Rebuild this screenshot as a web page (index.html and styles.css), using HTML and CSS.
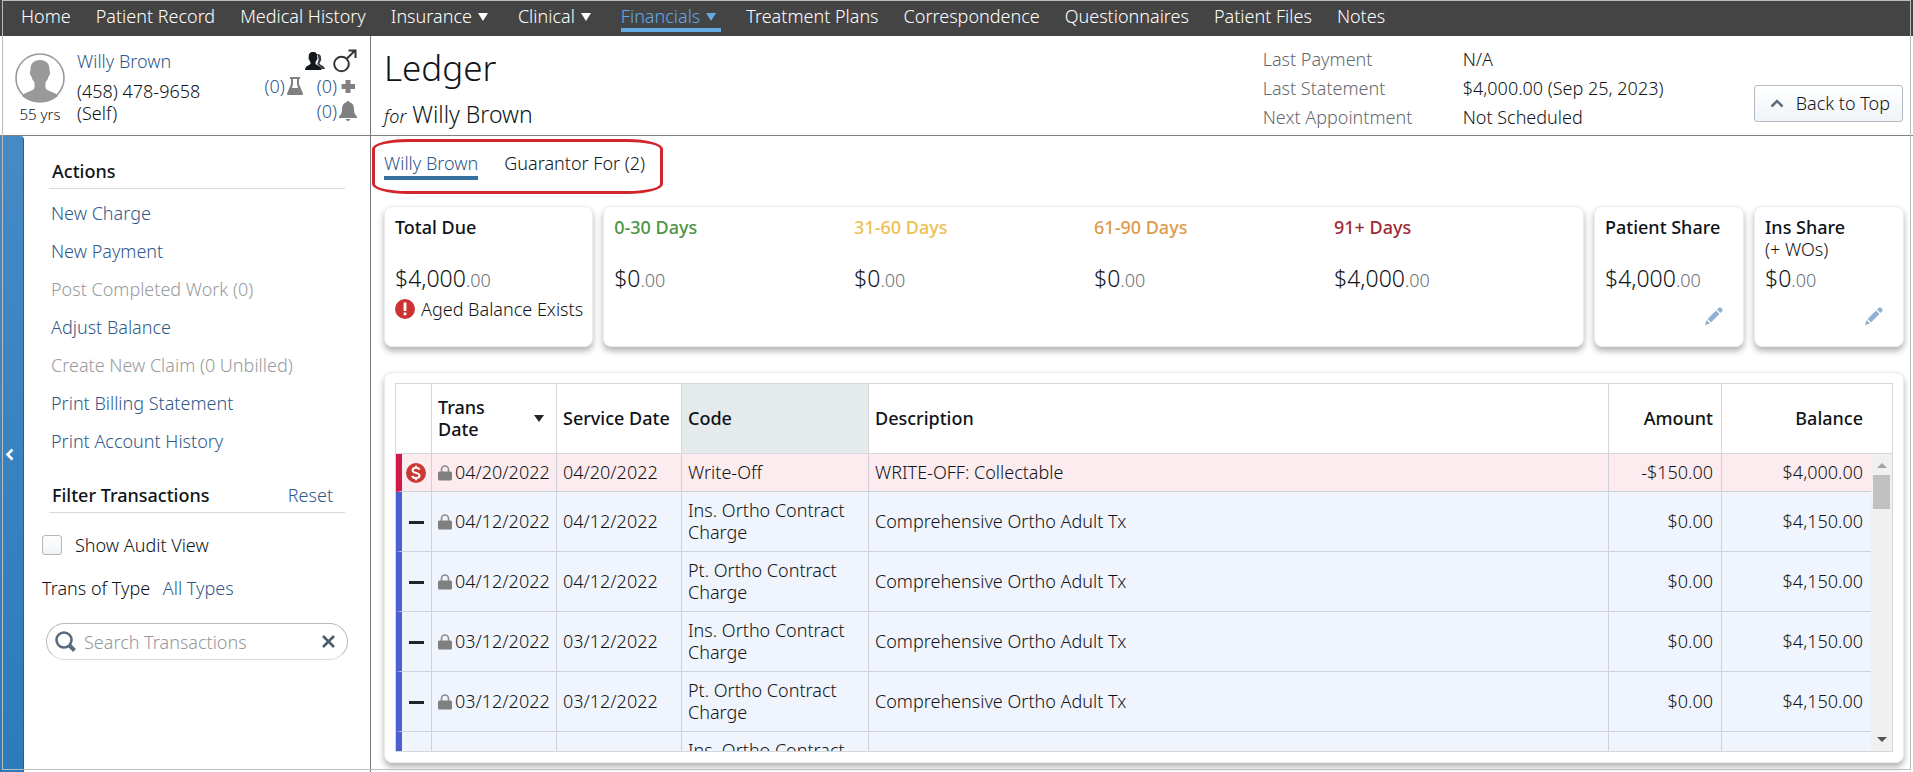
FILE: index.html
```html
<!DOCTYPE html>
<html lang="en">
<head>
    <meta charset="UTF-8">
    <meta name="viewport" content="width=device-width, initial-scale=1.0">
    <title>Ledger - Willy Brown</title>
    <link rel="stylesheet" href="styles.css">
</head>
<body>
    <!-- shared icons -->
    <svg class="sprite" aria-hidden="true">
        <symbol id="lock" viewBox="0 0 14 16">
            <path d="M3.5 7V4.5a3.5 3.5 0 0 1 7 0V7" fill="none" stroke="#8a8a8a" stroke-width="1.6"/>
            <rect x="0" y="6.5" width="14" height="9" rx="1.5" fill="#808080"/>
        </symbol>
        <symbol id="pencil" viewBox="0 0 18 18">
            <path d="M0 18l1.6-5L5 16.4zM2.6 12L11 3.600l3.400 3.400L6 15.400zM12 2.600l1.800-1.800a1.600 1.600 0 0 1 2.300 0l1.100 1.100a1.600 1.600 0 0 1 0 2.300L15.400 6z" fill="#91b1d2"/>
        </symbol>
    </svg>

    <div class="app">
        <nav class="topnav">
            <a href="#">Home</a>
            <a href="#">Patient Record</a>
            <a href="#">Medical History</a>
            <a href="#" class="has-menu">Insurance</a>
            <a href="#" class="has-menu">Clinical</a>
            <a href="#" class="has-menu active">Financials</a>
            <a href="#">Treatment Plans</a>
            <a href="#">Correspondence</a>
            <a href="#">Questionnaires</a>
            <a href="#">Patient Files</a>
            <a href="#">Notes</a>
        </nav>

        <header class="header">
            <div class="patient">
                <div class="avatar">
                    <svg width="50" height="50" viewBox="0 0 50 50" aria-hidden="true">
                        <circle cx="25" cy="25" r="24" fill="#fff" stroke="#999" stroke-width="1.600"/>
                        <path d="M25 7c6 0 9.500 3.500 9.500 9.500 0 2 .8 2 .6 4-.2 1.800-1.300 2-1.700 3.500-.6 2.500-1.900 4-2.900 5.500v5c0 2 3 3 6.500 4.500 3 1.200 5 2.300 6 4A25 25 0 0 1 25 49 25 25 0 0 1 7 43c1-1.700 3-2.800 6-4 3.500-1.500 6.500-2.500 6.500-4.500v-5c-1-1.500-2.300-3-2.900-5.500-.4-1.500-1.500-1.700-1.700-3.500-.2-2 .6-2 .6-4C15.500 10.500 19 7 25 7z" fill="#999"/>
                    </svg>
                    <span>55 yrs</span>
                </div>
                <div class="patient-info">
                    <a href="#" class="patient-name">Willy Brown</a>
                    <span>(458) 478-9658</span>
                    <span>(Self)</span>
                </div>
                <div class="patient-flags">
                    <div class="flag-row">
                        <svg width="20" height="18" viewBox="0 0 20 18" aria-hidden="true">
                            <path d="M12 2c3 0 4.500 2 4 4.500.6.800.2 2.200-.5 2.800-.3 1.200-.8 1.700-1 2.200.3 1.500 5 2 5.500 5.500h-4c-.5-3-3-4-4-5 1.500-2 2.500-6 0-10z" fill="#3a4047"/>
                            <path d="M8 0c3.200 0 4.500 2 4.200 5 .6.700.3 2.300-.5 2.800-.2 1.300-.7 1.900-1.200 2.500v1.400c.5 1.500 5.500 1.500 6 6.300H0c.3-4.800 5-4.800 5.500-6.300v-1.400C5 9.700 4.500 9.100 4.300 7.800c-.8-.5-1.100-2.100-.5-2.800C3.500 2 4.800 0 8 0z" fill="#14181d"/>
                        </svg>
                        <svg width="24" height="24" viewBox="0 0 24 24" fill="none" stroke="#333" stroke-width="2" aria-hidden="true">
                            <circle cx="8.500" cy="15" r="7.300"/>
                            <path d="M14 9.500L22 1.500M15.500 1.500H22.500V9"/>
                        </svg>
                    </div>
                    <div class="flag-row">
                        <a href="#">(0)
                            <svg width="16" height="18" viewBox="0 0 16 18" aria-hidden="true">
                                <path d="M3 0h10v2h-1v5l4 9.500c.2.900-.2 1.500-1 1.500H1c-.8 0-1.200-.6-1-1.500L4 7V2H3zM6 2v5.500L4.800 11h6.400L10 7.500V2z" fill="#808080" fill-rule="evenodd"/>
                            </svg>
                        </a>
                        <a href="#">(0)
                            <svg width="18" height="18" viewBox="0 0 18 18" aria-hidden="true">
                                <path d="M6.500 3h5v4h4.500v5H11.500v4h-5v-4H2.500V7h4z" fill="#808080"/>
                            </svg>
                        </a>
                    </div>
                    <div class="flag-row">
                        <a href="#">(0)
                            <svg width="18" height="20" viewBox="0 0 18 20" aria-hidden="true">
                                <path d="M9 0c.8 0 1.400.5 1.400 1.300C13.500 2 15 4.500 15 8c0 4.500 1.500 6 3 7.500V17H0v-1.500C1.500 14 3 12.500 3 8c0-3.500 1.500-6 4.600-6.700C7.600.5 8.200 0 9 0zM6.500 18h5c-.4 1.300-1.400 2-2.500 2s-2.100-.7-2.500-2z" fill="#808080"/>
                            </svg>
                        </a>
                    </div>
                </div>
            </div>

            <div class="page-title">
                <h1>Ledger</h1>
                <p><em>for</em> Willy Brown</p>
            </div>

            <dl class="summary">
                <dt>Last Payment</dt>
                <dd>N/A</dd>
                <dt>Last Statement</dt>
                <dd>$4,000.00 (Sep 25, 2023)</dd>
                <dt>Next Appointment</dt>
                <dd>Not Scheduled</dd>
            </dl>

            <button type="button" class="back-to-top">
                <svg width="14" height="10" viewBox="0 0 14 10" fill="none" stroke="#5f6f7e" stroke-width="2.600" aria-hidden="true"><path d="M1.500 8.500L7 3l5.500 5.500"/></svg>
                Back to Top
            </button>
        </header>

        <div class="content">
            <button type="button" class="collapse" aria-label="Collapse sidebar">
                <svg width="9" height="13" viewBox="0 0 9 13" fill="none" stroke="#fff" stroke-width="2.600" aria-hidden="true"><path d="M7.500 1.500l-5 5 5 5"/></svg>
            </button>

            <aside class="sidebar">
                <div class="side-heading">
                    <h2>Actions</h2>
                </div>
                <ul class="actions">
                    <li><a href="#">New Charge</a></li>
                    <li><a href="#">New Payment</a></li>
                    <li class="disabled">Post Completed Work (0)</li>
                    <li><a href="#">Adjust Balance</a></li>
                    <li class="disabled">Create New Claim (0 Unbilled)</li>
                    <li><a href="#">Print Billing Statement</a></li>
                    <li><a href="#">Print Account History</a></li>
                </ul>

                <div class="side-heading">
                    <h2>Filter Transactions</h2>
                    <a href="#">Reset</a>
                </div>
                <div class="filters">
                    <label class="audit"><input type="checkbox"> Show Audit View</label>
                    <div class="type-filter">Trans of Type <a href="#">All Types</a></div>
                    <div class="search">
                        <svg width="21" height="21" viewBox="0 0 21 21" fill="none" stroke="#5a6b7b" aria-hidden="true">
                            <circle cx="9" cy="9" r="7.500" stroke-width="2.600"/>
                            <path d="M14 14l5.500 5.500" stroke-width="4"/>
                        </svg>
                        <input type="text" placeholder="Search Transactions" aria-label="Search Transactions">
                        <button type="button" aria-label="Clear search">
                            <svg width="13" height="13" viewBox="0 0 13 13" fill="none" stroke="#4b5c6c" stroke-width="2.600" aria-hidden="true"><path d="M1 1l11 11M12 1L1 12"/></svg>
                        </button>
                    </div>
                </div>
            </aside>

            <main class="ledger">
                <div class="tabs">
                    <a href="#" class="active">Willy Brown</a>
                    <a href="#">Guarantor For (2)</a>
                    <span class="tabs-mark"></span>
                </div>

                <section class="totals">
                    <div class="card">
                        <h3>Total Due</h3>
                        <p class="money">$4,000<small>.00</small></p>
                        <p class="warning">
                            <svg width="20" height="20" viewBox="0 0 20 20" aria-hidden="true">
                                <circle cx="10" cy="10" r="10" fill="#cc3433"/>
                                <path d="M8.600 3.500h2.800v8.500H8.600zM8.600 13.500h2.800v2.800H8.600z" fill="#fff"/>
                            </svg>
                            Aged Balance Exists
                        </p>
                    </div>
                    <div class="card aging">
                        <div>
                            <h3 class="green">0-30 Days</h3>
                            <p class="money">$0<small>.00</small></p>
                        </div>
                        <div>
                            <h3 class="yellow">31-60 Days</h3>
                            <p class="money">$0<small>.00</small></p>
                        </div>
                        <div>
                            <h3 class="orange">61-90 Days</h3>
                            <p class="money">$0<small>.00</small></p>
                        </div>
                        <div>
                            <h3 class="red">91+ Days</h3>
                            <p class="money">$4,000<small>.00</small></p>
                        </div>
                    </div>
                    <div class="card share">
                        <h3>Patient Share</h3>
                        <p class="money">$4,000<small>.00</small></p>
                        <button type="button" class="edit" aria-label="Edit patient share"><svg width="18" height="18"><use href="#pencil"/></svg></button>
                    </div>
                    <div class="card share">
                        <h3>Ins Share<span>(+ WOs)</span></h3>
                        <p class="money">$0<small>.00</small></p>
                        <button type="button" class="edit" aria-label="Edit insurance share"><svg width="18" height="18"><use href="#pencil"/></svg></button>
                    </div>
                </section>

                <section class="card transactions">
                    <div class="grid">
                        <div class="grid-rows">
                            <table>
                                <colgroup>
                                    <col class="col-type">
                                    <col class="col-date">
                                    <col class="col-date">
                                    <col class="col-code">
                                    <col>
                                    <col class="col-amount">
                                    <col class="col-balance">
                                </colgroup>
                                <thead>
                                    <tr>
                                        <th></th>
                                        <th><div class="sorted">Trans<br>Date</div></th>
                                        <th>Service Date</th>
                                        <th class="selected">Code</th>
                                        <th>Description</th>
                                        <th class="num">Amount</th>
                                        <th class="num">Balance</th>
                                    </tr>
                                </thead>
                                <tbody>
                                    <tr class="write-off">
                                        <td>
                                            <svg width="20" height="20" viewBox="0 0 20 20" aria-hidden="true">
                                                <circle cx="10" cy="10" r="10" fill="#c93a35"/>
                                                <path d="M13.500 6.800C13 5.300 11.800 4.800 10 4.800c-2 0-3.400.9-3.400 2.400 0 3.500 6.900 1.800 6.900 5.300 0 1.600-1.400 2.600-3.500 2.600-2 0-3.400-.8-3.700-2.400M10 2.800v2M10 15v2.200" fill="none" stroke="#fff" stroke-width="2"/>
                                            </svg>
                                        </td>
                                        <td><svg class="lock" width="14" height="16"><use href="#lock"/></svg>04/20/2022</td>
                                        <td>04/20/2022</td>
                                        <td>Write-Off</td>
                                        <td>WRITE-OFF: Collectable</td>
                                        <td class="num">-$150.00</td>
                                        <td class="num">$4,000.00</td>
                                    </tr>
                                    <tr>
                                        <td><span class="dash"></span></td>
                                        <td><svg class="lock" width="14" height="16"><use href="#lock"/></svg>04/12/2022</td>
                                        <td>04/12/2022</td>
                                        <td>Ins. Ortho Contract Charge</td>
                                        <td>Comprehensive Ortho Adult Tx</td>
                                        <td class="num">$0.00</td>
                                        <td class="num">$4,150.00</td>
                                    </tr>
                                    <tr>
                                        <td><span class="dash"></span></td>
                                        <td><svg class="lock" width="14" height="16"><use href="#lock"/></svg>04/12/2022</td>
                                        <td>04/12/2022</td>
                                        <td>Pt. Ortho Contract Charge</td>
                                        <td>Comprehensive Ortho Adult Tx</td>
                                        <td class="num">$0.00</td>
                                        <td class="num">$4,150.00</td>
                                    </tr>
                                    <tr>
                                        <td><span class="dash"></span></td>
                                        <td><svg class="lock" width="14" height="16"><use href="#lock"/></svg>03/12/2022</td>
                                        <td>03/12/2022</td>
                                        <td>Ins. Ortho Contract Charge</td>
                                        <td>Comprehensive Ortho Adult Tx</td>
                                        <td class="num">$0.00</td>
                                        <td class="num">$4,150.00</td>
                                    </tr>
                                    <tr>
                                        <td><span class="dash"></span></td>
                                        <td><svg class="lock" width="14" height="16"><use href="#lock"/></svg>03/12/2022</td>
                                        <td>03/12/2022</td>
                                        <td>Pt. Ortho Contract Charge</td>
                                        <td>Comprehensive Ortho Adult Tx</td>
                                        <td class="num">$0.00</td>
                                        <td class="num">$4,150.00</td>
                                    </tr>
                                    <tr>
                                        <td></td>
                                        <td></td>
                                        <td></td>
                                        <td>Ins. Ortho Contract Charge</td>
                                        <td></td>
                                        <td></td>
                                        <td></td>
                                    </tr>
                                </tbody>
                            </table>
                        </div>
                        <div class="scrollbar" aria-hidden="true">
                            <div class="scroll-head"></div>
                            <div class="scroll-track">
                                <i class="arrow-up"></i>
                                <i class="thumb"></i>
                                <i class="arrow-down"></i>
                            </div>
                        </div>
                    </div>
                </section>
            </main>
        </div>
        <div class="frame"></div>
    </div>
</body>
</html>
```
FILE: styles.css
```css
* {
    box-sizing: border-box;
}
body {
    margin: 0;
    font-family: "Noto Sans", "Open Sans", sans-serif;
    font-size: 18px;
    font-weight: 300;
    line-height: 22px;
    color: #101418;
    background: #fff;
}
h1, h2, h3, p, ul, dl, dd {
    margin: 0;
    padding: 0;
}
ul {
    list-style: none;
}
h2, h3 {
    font-size: 18px;
    font-weight: 500;
}
a {
    color: #30598a;
    text-decoration: none;
}
button, input {
    font: inherit;
    color: inherit;
}
.sprite {
    display: none;
}
.app {
    position: relative;
    display: flex;
    flex-direction: column;
    height: 100vh;
    min-height: 600px;
    overflow: hidden;
}
/* thin outline drawn over the whole window */
.frame {
    position: absolute;
    inset: 0 2px 2px;
    border: 1px solid #b9bdbb;
    pointer-events: none;
}

/* top navigation */
.topnav {
    display: flex;
    align-items: flex-start;
    gap: 25px;
    height: 36px;
    padding: 4px 21px 0;
    background: #444;
}
.topnav a {
    height: 28px;
    line-height: 24px;
    color: #fff;
    white-space: nowrap;
}
.topnav .has-menu {
    padding-right: 5px;
}
.has-menu::after {
    content: "";
    display: inline-block;
    margin-left: 6px;
    border: 5px solid transparent;
    border-top: 8px solid currentColor;
    border-bottom: 0;
    vertical-align: 2px;
}
.topnav .active {
    color: #63a9e4;
    border-bottom: 4px solid #63a9e4;
}

/* header */
.header {
    display: flex;
    height: 100px;
    border-bottom: 1px solid #808080;
}
.patient {
    display: flex;
    width: 371px;
    padding: 12px 13px 0 15px;
    border-right: 1px solid #77787c;
}
.avatar {
    display: flex;
    flex-direction: column;
    align-items: center;
    width: 50px;
    padding-top: 5px;
    font-size: 15px;
}
.patient-info {
    display: flex;
    flex-direction: column;
    margin-left: 12px;
    padding-top: 2px;
}
.patient-name {
    margin-bottom: 8px;
}
.patient-flags {
    display: flex;
    flex-direction: column;
    align-items: flex-end;
    margin-left: auto;
}
.flag-row {
    display: flex;
    align-items: center;
    gap: 8px;
    height: 25px;
}
.flag-row a {
    display: flex;
    align-items: center;
    gap: 2px;
    margin-left: 6px;
}
.page-title {
    padding: 9px 0 0 13px;
}
.page-title h1 {
    font-size: 35px;
    font-weight: 300;
    line-height: 46px;
}
.page-title p {
    font-size: 23px;
    line-height: 46px;
}
.page-title em {
    font-size: 18px;
}
.summary {
    display: grid;
    grid-template-columns: 200px 291px;
    align-content: start;
    margin-left: auto;
    padding-top: 9px;
    line-height: 29px;
}
.summary dt {
    color: #66696d;
}
.back-to-top {
    display: flex;
    align-items: center;
    gap: 12px;
    height: 37px;
    margin: 49px 10px 0 0;
    padding: 0 12px 2px 15px;
    border: 1px solid #b4bac0;
    border-radius: 3px;
    background: linear-gradient(#fff, #eff4f8);
    white-space: nowrap;
}

/* sidebar */
.content {
    display: flex;
    flex: 1;
    min-height: 0;
}
.collapse {
    width: 24px;
    padding: 0 0 0 5px;
    border: 0;
    border-right: 1px solid #2c5b8c;
    border-radius: 0 4px 0 0;
    background: linear-gradient(#468ac5, #2c7bbd);
    text-align: left;
}
.sidebar {
    width: 347px;
    padding: 21px 22px 0 18px;
    border-right: 1px solid #77787c;
}
.side-heading {
    display: flex;
    justify-content: space-between;
    margin: 0 3px 0 7px;
    padding: 3px 12px 6px 3px;
    border-bottom: 1px solid #d8d8da;
}
.actions {
    display: flex;
    flex-direction: column;
    gap: 16px;
    padding: 13px 9px 29px;
}
.disabled {
    color: #979ba0;
}
.filters {
    display: flex;
    flex-direction: column;
}
.audit {
    display: flex;
    align-items: center;
    gap: 13px;
    margin-top: 21px;
}
.audit input {
    appearance: none;
    width: 20px;
    height: 20px;
    margin: 0;
    border: 1px solid #b4b8bc;
    border-radius: 3px;
    background: linear-gradient(#fff, #f0f3f6);
}
.type-filter {
    margin-top: 21px;
}
.type-filter a {
    margin-left: 8px;
}
.search {
    display: flex;
    align-items: center;
    height: 37px;
    margin: 24px 0 0 4px;
    padding: 0 12px 0 8px;
    border: 1px solid #b8bbbe;
    border-bottom-color: #d8dadc;
    border-radius: 19px;
}
.search input {
    flex: 1;
    min-width: 0;
    padding: 0 8px;
    border: 0;
    outline: 0;
    background: none;
}
.search input::placeholder {
    color: #93989e;
}
.search button {
    display: flex;
    padding: 0;
    border: 0;
    background: none;
}

/* ledger */
.ledger {
    display: flex;
    flex: 1;
    flex-direction: column;
    min-width: 0;
    padding: 15px 9px 9px 13px;
}
.tabs {
    position: relative;
    display: flex;
    align-self: flex-start;
    gap: 26px;
    margin-bottom: 26px;
}
.tabs a {
    height: 29px;
    line-height: 24px;
    color: #101418;
}
.tabs .active {
    color: #30598a;
    border-bottom: 4px solid #35709f;
}
.tabs-mark {
    position: absolute;
    inset: -12px -18px -14px -12px;
    border: 3px solid #d2262c;
    border-radius: 36px / 10px;
    pointer-events: none;
}
.card {
    border: 1px solid #ececec;
    border-radius: 8px;
    background: #fff;
    box-shadow: 0 4px 6px rgba(0, 0, 0, 0.3);
}
.totals {
    display: flex;
    gap: 10px;
    margin-bottom: 25px;
}
.totals .card {
    min-width: 150px;
    height: 141px;
    padding: 9px 9px 0 10px;
}
.totals .aging {
    display: grid;
    flex: 1;
    grid-template-columns: repeat(4, 1fr);
}
.totals h3 {
    height: 44px;
}
.totals h3 span {
    display: block;
    font-weight: 300;
}
.green { color: #4e9344; }
.yellow { color: #eec052; }
.orange { color: #dd9b4c; }
.red { color: #a02a35; }
.money {
    font-size: 23px;
    line-height: 36px;
}
.money small {
    font-size: 18px;
    color: #6c6e71;
}
.warning {
    display: flex;
    align-items: center;
    gap: 6px;
    white-space: nowrap;
}
.share {
    display: flex;
    flex-direction: column;
}
.edit {
    align-self: flex-end;
    display: flex;
    margin: 9px 11px 0 0;
    padding: 0;
    border: 0;
    background: none;
}

/* transactions table */
.transactions {
    flex: 1;
    min-height: 0;
    padding: 10px;
}
.grid {
    display: flex;
    height: 100%;
    border: 1px solid #d5d7da;
}
.grid-rows {
    flex: 1;
    min-width: 0;
    overflow: hidden;
}
table {
    width: 100%;
    table-layout: fixed;
    border-spacing: 0;
}
.col-type { width: 36px; }
.col-date { width: 125px; }
.col-code { width: 187px; }
.col-amount { width: 113px; }
.col-balance { width: 149px; }
th, td {
    padding: 7px 7px 8px 6px;
    border-right: 1px solid #cfd2da;
    border-bottom: 1px solid #cfd2da;
    text-align: left;
    white-space: nowrap;
}
th {
    height: 70px;
    font-weight: 500;
    border-color: #d5d7da;
}
th:last-child, td:last-child {
    border-right: 0;
}
td:nth-child(4) {
    white-space: normal;
}
td:first-child {
    padding: 0 1px 2px 0;
    border-left: 6px solid #4c60d2;
    text-align: center;
}
.num {
    padding-right: 8px;
    text-align: right;
}
.selected {
    background: #e5eaed;
}
.sorted {
    display: flex;
    align-items: center;
    justify-content: space-between;
    padding-right: 5px;
}
.sorted::after {
    content: "";
    border: 5px solid transparent;
    border-top: 7px solid #212529;
    border-bottom: 0;
}
tbody tr {
    background: #f0f4fc;
}
.write-off {
    background: #fcecef;
}
.write-off td:first-child {
    border-left-color: #d3184b;
}
.write-off td svg {
    vertical-align: middle;
}
td .lock, .write-off .lock {
    margin-right: 3px;
    vertical-align: -2px;
}
.dash {
    display: inline-block;
    width: 15px;
    height: 3px;
    vertical-align: middle;
    background: #212529;
}
.scrollbar {
    display: flex;
    flex-direction: column;
    width: 21px;
}
.scroll-head {
    height: 70px;
    border-bottom: 1px solid #d5d7da;
}
.scroll-track {
    display: flex;
    flex: 1;
    flex-direction: column;
    align-items: center;
    padding: 9px 0;
    background: #f0f0f0;
}
.thumb {
    width: 17px;
    height: 34px;
    margin: 7px 0 auto;
    background: #c1c1c1;
}
.arrow-up, .arrow-down {
    border: 5px solid transparent;
}
.arrow-up {
    border-top: 0;
    border-bottom-color: #a3a3a3;
}
.arrow-down {
    border-bottom: 0;
    border-top-color: #505050;
}
```
